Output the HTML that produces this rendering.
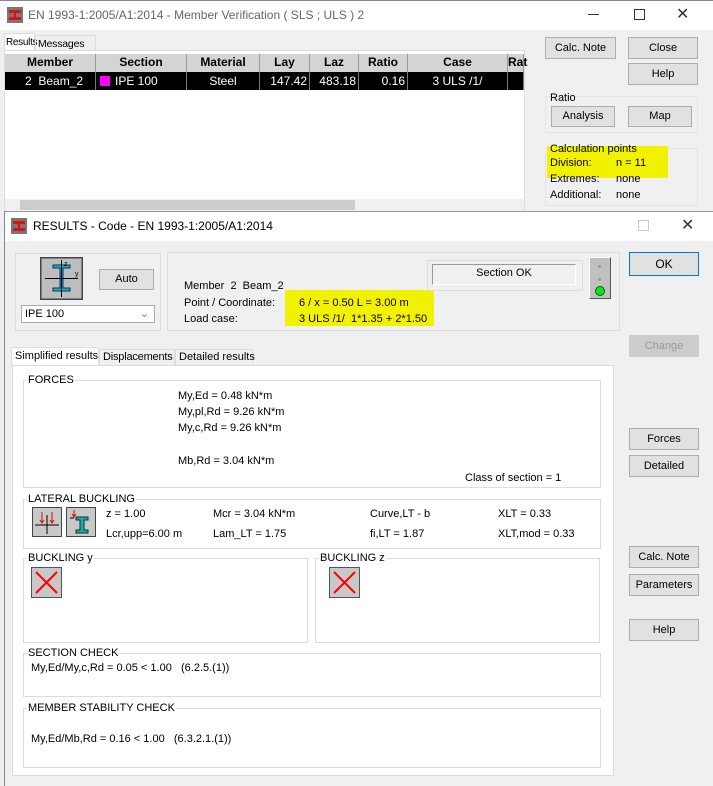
<!DOCTYPE html>
<html><head><meta charset="utf-8"><style>
*{box-sizing:border-box;margin:0;padding:0}
body{width:713px;height:786px;position:relative;overflow:hidden;background:#f0f0f0;font-family:"Liberation Sans",sans-serif;font-size:11px;color:#000}
.a{position:absolute;white-space:nowrap}
.btn{position:absolute;background:#e1e1e1;border:1px solid #adadad;text-align:center;font-size:11px}
.grp{position:absolute;border:1px solid #dcdcdc}
.gl{position:absolute;top:-7px;left:3px;background:#fff;padding:0 1px;font-size:11px}
.th{position:absolute;top:0;height:18px;background:#d4d4d4;border-right:1px solid #999;font-weight:bold;font-size:12px;text-align:center;line-height:17px}
.td{position:absolute;top:18px;height:18px;background:#000;color:#fff;border-right:1px solid #777;font-size:12px;line-height:18px}
.hl{position:absolute;background:#f2f200}
</style></head><body>
<!-- back window -->
<div class="a" style="left:0;top:0;width:713px;height:30px;background:#fff;border-top:1px solid #888"></div>
<svg class="a" style="left:7px;top:7px" width="16" height="16"><rect x="0" y="0" width="16" height="16" fill="#777"/><path d="M2 3h12v3H9v4h5v3H2v-3h5V6H2z" fill="#e01010"/></svg>
<div class="a" style="left:28px;top:8px;font-size:12px;color:#666">EN 1993-1:2005/A1:2014 - Member Verification ( SLS ; ULS ) 2</div>
<div class="a" style="left:588px;top:14px;width:11px;height:1px;background:#333"></div>
<div class="a" style="left:634px;top:9px;width:11px;height:11px;border:1px solid #333"></div>
<div class="a" style="left:676px;top:4px;font-size:16px;color:#333">✕</div>
<div class="a" style="left:4px;top:33px;width:31px;height:18px;background:#fff;border:1px solid #ddd;border-bottom:none;padding:3px 1px;font-size:10px;letter-spacing:-0.3px">Results</div>
<div class="a" style="left:35px;top:35px;width:61px;height:15px;border:1px solid #ddd;border-bottom:none;padding:2px 2px;font-size:10.5px;letter-spacing:-0.2px">Messages</div>
<div class="a" style="left:4px;top:50px;width:521px;height:162px;background:#fff;border:1px solid #ddd"></div>
<div class="a" style="left:5px;top:54px;width:521px;height:36px">
<div class="th" style="left:0;width:91px">Member</div><div class="th" style="left:91px;width:91px">Section</div><div class="th" style="left:182px;width:73px">Material</div><div class="th" style="left:255px;width:50px">Lay</div><div class="th" style="left:305px;width:49px">Laz</div><div class="th" style="left:354px;width:49px">Ratio</div><div class="th" style="left:403px;width:100px">Case</div><div class="th" style="left:503px;width:16px;text-align:left">Rat</div>
<div class="td" style="left:0;width:91px;padding-left:20px">2&nbsp; Beam_2</div>
<div class="td" style="left:91px;width:91px;padding-left:19px"><span style="position:absolute;left:4px;top:4px;width:10px;height:10px;background:#f0f"></span>IPE 100</div>
<div class="td" style="left:182px;width:73px;text-align:center">Steel</div>
<div class="td" style="left:255px;width:50px;text-align:right;padding-right:2px">147.42</div>
<div class="td" style="left:305px;width:49px;text-align:right;padding-right:2px">483.18</div>
<div class="td" style="left:354px;width:49px;text-align:right;padding-right:2px">0.16</div>
<div class="td" style="left:403px;width:100px;text-align:center">3 ULS /1/</div>
<div class="td" style="left:503px;width:16px"></div>
</div>
<div class="a" style="left:5px;top:199px;width:519px;height:12px;background:#f0f0f0"></div>
<div class="a" style="left:20px;top:200px;width:335px;height:10px;background:#ccc"></div>
<div class="btn" style="left:545px;top:37px;width:71px;height:22px;line-height:20px">Calc. Note</div>
<div class="btn" style="left:628px;top:37px;width:70px;height:22px;line-height:20px">Close</div>
<div class="btn" style="left:628px;top:63px;width:70px;height:22px;line-height:20px">Help</div>
<div class="grp" style="left:545px;top:96px;width:153px;height:37px;border-color:#e4e4e4"></div>
<div class="a" style="left:550px;top:92px">Ratio</div>
<div class="btn" style="left:551px;top:106px;width:64px;height:21px;line-height:19px">Analysis</div>
<div class="btn" style="left:628px;top:106px;width:64px;height:21px;line-height:19px">Map</div>
<div class="grp" style="left:545px;top:148px;width:153px;height:58px;border-color:#e4e4e4"></div>
<div class="hl" style="left:547px;top:146px;width:121px;height:32px"></div>
<div class="a" style="left:550px;top:143px">Calculation points</div>
<div class="a" style="left:550px;top:157px">Division:</div><div class="a" style="left:616px;top:157px">n = 11</div>
<div class="a" style="left:550px;top:173px">Extremes:</div><div class="a" style="left:616px;top:173px">none</div>
<div class="a" style="left:550px;top:189px">Additional:</div><div class="a" style="left:616px;top:189px">none</div>
<!-- front window -->
<div class="a" style="left:4px;top:211px;width:709px;height:575px;background:#f0f0f0;border-left:1px solid #7a8aa0;border-top:1px solid #999"></div>
<div class="a" style="left:5px;top:212px;width:708px;height:29px;background:#fff"></div>
<svg class="a" style="left:11px;top:218px" width="16" height="16"><rect width="16" height="16" fill="#777"/><path d="M2 3h12v3H9v4h5v3H2v-3h5V6H2z" fill="#e01010"/></svg>
<div class="a" style="left:33px;top:219px;font-size:12px">RESULTS - Code - EN 1993-1:2005/A1:2014</div>
<div class="a" style="left:638px;top:220px;width:11px;height:11px;border:1px solid #ccc"></div>
<div class="a" style="left:681px;top:215px;font-size:16px;color:#333">✕</div>
<div class="grp" style="left:15px;top:253px;width:146px;height:78px;border-color:#ddd"></div>
<svg class="a" style="left:40px;top:257px" width="43" height="43"><rect x="0.5" y="0.5" width="42" height="42" fill="#bdbdbd" stroke="#444" stroke-width="2"/><path d="M13 8h17v3h-7v20h7v3H13v-3h7V11h-7z" fill="#20b0c0" stroke="#036" stroke-width="1"/><line x1="21.5" y1="3" x2="21.5" y2="40" stroke="#000"/><line x1="5" y1="21.5" x2="38" y2="21.5" stroke="#000"/><text x="24" y="9" font-size="7" font-family="Liberation Sans">z</text><text x="35" y="19" font-size="7" font-family="Liberation Sans">y</text></svg>
<div class="btn" style="left:99px;top:269px;width:55px;height:21px;line-height:19px">Auto</div>
<div class="a" style="left:21px;top:305px;width:134px;height:18px;background:#fff;border:1px solid #aaa;padding:2px 3px">IPE 100<span style="position:absolute;right:5px;top:1px;color:#777">⌄</span></div>
<div class="grp" style="left:167px;top:252px;width:453px;height:79px;border-color:#ddd"></div>
<div class="hl" style="left:285px;top:290px;width:149px;height:36px"></div>
<div class="a" style="left:184px;top:280px">Member&nbsp; 2&nbsp; Beam_2</div>
<div class="a" style="left:184px;top:297px">Point / Coordinate:</div><div class="a" style="left:299px;top:297px">6 / x = 0.50 L = 3.00 m</div>
<div class="a" style="left:184px;top:313px">Load case:</div><div class="a" style="left:299px;top:313px">3 ULS /1/&nbsp; 1*1.35 + 2*1.50</div>
<div class="a" style="left:427px;top:260px;width:156px;height:31px;border:1px solid #ddd"></div>
<div class="a" style="left:432px;top:264px;width:144px;height:21px;border:1px solid #999;border-right-color:#fff;border-bottom-color:#fff;text-align:center;line-height:16px">Section OK</div>
<div class="a" style="left:589px;top:257px;width:22px;height:42px;background:#c0c0c0;border:1px solid #555;border-top-color:#fff;border-left-color:#fff"></div>
<div class="a" style="left:598px;top:265px;width:3px;height:3px;border-radius:2px;background:#999"></div>
<div class="a" style="left:598px;top:278px;width:3px;height:3px;border-radius:2px;background:#999"></div>
<div class="a" style="left:595px;top:286px;width:10px;height:10px;border-radius:5px;background:#10e020;border:1px solid #060"></div>
<div class="btn" style="left:629px;top:252px;width:70px;height:24px;line-height:22px;border:1px solid #0078d7;font-size:12px">OK</div>
<div class="btn" style="left:629px;top:335px;width:70px;height:22px;line-height:20px;color:#999;background:#ccc;border-color:#ccc">Change</div>
<div class="a" style="left:11px;top:347px;width:88px;height:19px;background:#fff;border:1px solid #ddd;border-bottom:none;padding:2px 3px">Simplified results</div>
<div class="a" style="left:99px;top:349px;width:76px;height:16px;border:1px solid #ddd;border-bottom:none;padding:1px 3px;letter-spacing:-0.2px">Displacements</div>
<div class="a" style="left:175px;top:349px;width:78px;height:16px;border:1px solid #ddd;border-bottom:none;padding:1px 3px">Detailed results</div>
<div class="a" style="left:12px;top:365px;width:602px;height:411px;background:#fff;border:1px solid #ddd"></div>
<div class="grp" style="left:23px;top:380px;width:578px;height:108px"><span class="gl">FORCES</span></div>
<div class="a" style="left:178px;top:390px">My,Ed = 0.48 kN*m</div>
<div class="a" style="left:178px;top:406px">My,pl,Rd = 9.26 kN*m</div>
<div class="a" style="left:178px;top:422px">My,c,Rd = 9.26 kN*m</div>
<div class="a" style="left:178px;top:455px">Mb,Rd = 3.04 kN*m</div>
<div class="a" style="left:465px;top:472px">Class of section = 1</div>
<div class="grp" style="left:23px;top:499px;width:578px;height:50px"><span class="gl">LATERAL BUCKLING</span></div>
<svg class="a" style="left:32px;top:507px" width="30" height="30"><rect x="0.5" y="0.5" width="29" height="29" fill="#c8c8c8" stroke="#444"/><line x1="3" y1="18" x2="27" y2="18" stroke="#000"/><line x1="15" y1="8" x2="15" y2="27" stroke="#000"/><path d="M10 5v10M20 5v10M8 13l2 3 2-3M18 13l2 3 2-3" stroke="#e00" fill="none"/></svg>
<svg class="a" style="left:66px;top:507px" width="30" height="30"><rect x="0.5" y="0.5" width="29" height="29" fill="#c8c8c8" stroke="#444"/><path d="M10 10h12v3h-4v10h4v3H10v-3h4V13h-4z" fill="#20b0a0" stroke="#033"/><path d="M8 3v6M6 7l2 3 2-3" stroke="#e00" fill="none"/><line x1="4" y1="11" x2="8" y2="11" stroke="#000"/></svg>
<div class="a" style="left:106px;top:508px">z = 1.00</div><div class="a" style="left:106px;top:528px">Lcr,upp=6.00 m</div>
<div class="a" style="left:213px;top:508px">Mcr = 3.04 kN*m</div><div class="a" style="left:213px;top:528px">Lam_LT = 1.75</div>
<div class="a" style="left:370px;top:508px">Curve,LT - b</div><div class="a" style="left:370px;top:528px">fi,LT = 1.87</div>
<div class="a" style="left:498px;top:508px">XLT = 0.33</div><div class="a" style="left:498px;top:528px">XLT,mod = 0.33</div>
<div class="grp" style="left:23px;top:558px;width:285px;height:85px"><span class="gl">BUCKLING y</span></div>
<div class="grp" style="left:315px;top:558px;width:285px;height:85px"><span class="gl">BUCKLING z</span></div>
<svg class="a" style="left:31px;top:567px" width="31" height="31"><rect x="0.5" y="0.5" width="30" height="30" fill="#c8c8c8" stroke="#555"/><path d="M5 5L26 26M26 5L5 26" stroke="#f00" stroke-width="2"/></svg>
<svg class="a" style="left:329px;top:567px" width="31" height="31"><rect x="0.5" y="0.5" width="30" height="30" fill="#c8c8c8" stroke="#555"/><path d="M5 5L26 26M26 5L5 26" stroke="#f00" stroke-width="2"/></svg>
<div class="grp" style="left:23px;top:653px;width:578px;height:44px"><span class="gl">SECTION CHECK</span></div>
<div class="a" style="left:31px;top:662px">My,Ed/My,c,Rd = 0.05 &lt; 1.00&nbsp;&nbsp; (6.2.5.(1))</div>
<div class="grp" style="left:23px;top:708px;width:578px;height:60px"><span class="gl">MEMBER STABILITY CHECK</span></div>
<div class="a" style="left:31px;top:733px">My,Ed/Mb,Rd = 0.16 &lt; 1.00&nbsp;&nbsp; (6.3.2.1.(1))</div>
<div class="btn" style="left:629px;top:428px;width:70px;height:22px;line-height:20px">Forces</div>
<div class="btn" style="left:629px;top:455px;width:70px;height:22px;line-height:20px">Detailed</div>
<div class="btn" style="left:629px;top:546px;width:70px;height:22px;line-height:20px">Calc. Note</div>
<div class="btn" style="left:629px;top:574px;width:70px;height:22px;line-height:20px">Parameters</div>
<div class="btn" style="left:629px;top:619px;width:70px;height:22px;line-height:20px">Help</div>
</body></html>
